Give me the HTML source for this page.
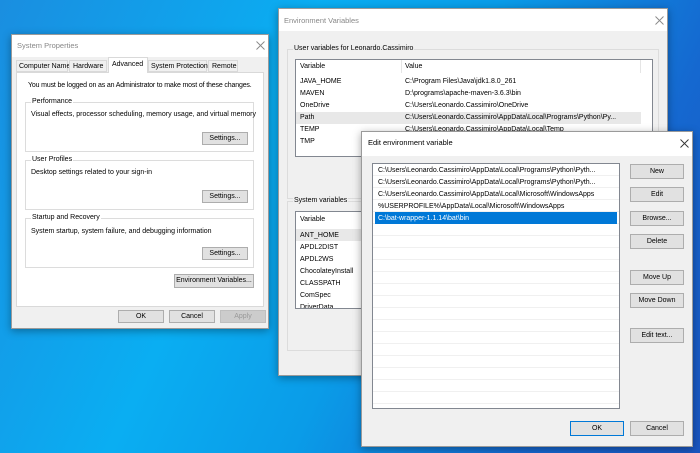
<!DOCTYPE html>
<html><head><style>
*{margin:0;padding:0;box-sizing:border-box}
body{width:700px;height:453px;overflow:hidden;position:relative;font-family:"Liberation Sans",sans-serif;font-size:7px;color:#000;
background:linear-gradient(115deg,#1a8ee0 0%,#0aaef2 35%,#0a9ce8 55%,#1568d0 80%,#1a55c0 100%)}
.a{position:absolute;white-space:nowrap}
.win{position:absolute;background:#f0f0f0;border:1px solid #9a9a9a;box-shadow:0 2px 8px rgba(0,0,0,.35)}
.tb{position:absolute;left:0;right:0;top:0;height:22px;background:#fff}
.btn{position:absolute;background:#e1e1e1;border:1px solid #adadad;text-align:center;line-height:12px}
.grp{position:absolute;border:1px solid #dcdcdc}
.lab{position:absolute;background:#f0f0f0;padding:0 1px;top:-5px;left:5px}
.list{position:absolute;background:#fff;border:1px solid #828790}
.x{position:absolute;width:9px;height:9px}
</style></head><body>
<svg width="0" height="0" style="position:absolute"><defs><symbol id="xx" viewBox="0 0 9 9"><path d="M0.5 0.5L8.5 8.5M8.5 0.5L0.5 8.5" stroke="currentColor" stroke-width="0.9" fill="none"/></symbol></defs></svg>

<!-- System Properties -->
<div class="win" style="left:11px;top:34px;width:258px;height:295px">
 <div class="tb"></div>
 <div class="a" style="left:5px;top:6px;color:#888;font-size:7.5px">System Properties</div>
 <svg class="x" style="left:244px;top:6px;color:#888"><use href="#xx"/></svg>
 <div style="position:absolute;left:4px;top:37px;width:248px;height:235px;background:#fff;border:1px solid #d9d9d9"></div>
 <div class="a" style="left:4px;top:25px;width:52px;height:12px;border:1px solid #d9d9d9;background:#f0f0f0;padding:2px 2px">Computer Name</div>
 <div class="a" style="left:57px;top:25px;width:38px;height:12px;border:1px solid #d9d9d9;background:#f0f0f0;padding:2px 3px">Hardware</div>
 <div class="a" style="left:96px;top:22px;width:40px;height:16px;border:1px solid #d9d9d9;border-bottom:none;background:#fff;padding:3px 3px">Advanced</div>
 <div class="a" style="left:136px;top:25px;width:59px;height:12px;border:1px solid #d9d9d9;background:#f0f0f0;padding:2px 2px">System Protection</div>
 <div class="a" style="left:196px;top:25px;width:30px;height:12px;border:1px solid #d9d9d9;background:#f0f0f0;padding:2px 3px">Remote</div>
 <div class="a" style="left:16px;top:47px;letter-spacing:-0.15px">You must be logged on as an Administrator to make most of these changes.</div>
 <div class="grp" style="left:13px;top:67px;width:229px;height:50px;background:#fff"><div class="lab" style="background:#fff">Performance</div>
  <div class="a" style="left:5px;top:8px">Visual effects, processor scheduling, memory usage, and virtual memory</div>
  <div class="btn" style="left:176px;top:29px;width:46px;height:13px">Settings...</div></div>
 <div class="grp" style="left:13px;top:125px;width:229px;height:50px"><div class="lab" style="background:#fff">User Profiles</div>
  <div class="a" style="left:5px;top:8px">Desktop settings related to your sign-in</div>
  <div class="btn" style="left:176px;top:29px;width:46px;height:13px">Settings...</div></div>
 <div class="grp" style="left:13px;top:183px;width:229px;height:50px"><div class="lab" style="background:#fff">Startup and Recovery</div>
  <div class="a" style="left:5px;top:9px">System startup, system failure, and debugging information</div>
  <div class="btn" style="left:176px;top:28px;width:46px;height:13px">Settings...</div></div>
 <div class="btn" style="left:162px;top:239px;width:80px;height:14px">Environment Variables...</div>
 <div class="btn" style="left:106px;top:275px;width:46px;height:13px">OK</div>
 <div class="btn" style="left:157px;top:275px;width:46px;height:13px">Cancel</div>
 <div class="btn" style="left:208px;top:275px;width:46px;height:13px;color:#999;background:#ccc;border-color:#bfbfbf">Apply</div>
</div>

<!-- Environment Variables -->
<div class="win" style="left:278px;top:8px;width:390px;height:368px">
 <div class="tb"></div>
 <div class="a" style="left:5px;top:7px;color:#888;font-size:7.5px">Environment Variables</div>
 <svg class="x" style="left:376px;top:7px;color:#888"><use href="#xx"/></svg>
 <div class="grp" style="left:8px;top:40px;width:372px;height:150px"><div class="lab">User variables for Leonardo.Cassimiro</div></div>
 <div class="list" style="left:16px;top:50px;width:358px;height:98px">
  <div class="a" style="left:0;top:0;width:345px;height:13px;border-right:1px solid #e5e5e5"></div>
  <div class="a" style="left:105px;top:0;height:13px;border-left:1px solid #e5e5e5"></div>
  <div class="a" style="left:4px;top:3px">Variable</div><div class="a" style="left:109px;top:3px">Value</div>
  <div class="a" style="left:0;top:52px;width:345px;height:12px;background:#e8e8e8"></div>
  <div class="a" style="left:4px;top:16px;line-height:12px">JAVA_HOME<br>MAVEN<br>OneDrive<br>Path<br>TEMP<br>TMP</div>
  <div class="a" style="left:109px;top:16px;line-height:12px">C:\Program Files\Java\jdk1.8.0_261<br>D:\programs\apache-maven-3.6.3\bin<br>C:\Users\Leonardo.Cassimiro\OneDrive<br>C:\Users\Leonardo.Cassimiro\AppData\Local\Programs\Python\Py...<br>C:\Users\Leonardo.Cassimiro\AppData\Local\Temp</div>
 </div>
 <div class="grp" style="left:8px;top:192px;width:372px;height:150px"><div class="lab">System variables</div></div>
 <div class="list" style="left:16px;top:202px;width:120px;height:98px;overflow:hidden">
  <div class="a" style="left:4px;top:4px">Variable</div>
  <div class="a" style="left:0;top:17px;width:120px;height:12px;background:#e8e8e8"></div>
  <div class="a" style="left:4px;top:18px;line-height:12px">ANT_HOME<br>APDL2DIST<br>APDL2WS<br>ChocolateyInstall<br>CLASSPATH<br>ComSpec<br>DriverData</div>
 </div>
</div>

<!-- Edit environment variable -->
<div class="win" style="left:361px;top:131px;width:332px;height:316px">
 <div class="tb" style="height:24px"></div>
 <div class="a" style="left:6px;top:6px;font-size:7.5px">Edit environment variable</div>
 <svg class="x" style="left:318px;top:7px;color:#333"><use href="#xx"/></svg>
 <div class="list" style="left:10px;top:31px;width:248px;height:246px;overflow:hidden;
   background:repeating-linear-gradient(#fff 0 11px,#f0f0f0 11px 12px)">
  <div class="a" style="left:2px;top:48px;width:242px;height:12px;background:#0078d7"></div>
  <div class="a" style="left:5px;top:1px;line-height:12px">C:\Users\Leonardo.Cassimiro\AppData\Local\Programs\Python\Pyth...<br>C:\Users\Leonardo.Cassimiro\AppData\Local\Programs\Python\Pyth...<br>C:\Users\Leonardo.Cassimiro\AppData\Local\Microsoft\WindowsApps<br>%USERPROFILE%\AppData\Local\Microsoft\WindowsApps<br><span style="color:#fff">C:\bat-wrapper-1.1.14\bat\bin</span></div>
 </div>
 <div class="btn" style="left:268px;top:32px;width:54px;height:15px;line-height:13px">New</div>
 <div class="btn" style="left:268px;top:55px;width:54px;height:15px;line-height:13px">Edit</div>
 <div class="btn" style="left:268px;top:79px;width:54px;height:15px;line-height:13px">Browse...</div>
 <div class="btn" style="left:268px;top:102px;width:54px;height:15px;line-height:13px">Delete</div>
 <div class="btn" style="left:268px;top:138px;width:54px;height:15px;line-height:13px">Move Up</div>
 <div class="btn" style="left:268px;top:161px;width:54px;height:15px;line-height:13px">Move Down</div>
 <div class="btn" style="left:268px;top:196px;width:54px;height:15px;line-height:13px">Edit text...</div>
 <div class="btn" style="left:208px;top:289px;width:54px;height:15px;line-height:13px;border-color:#0078d7">OK</div>
 <div class="btn" style="left:268px;top:289px;width:54px;height:15px;line-height:13px">Cancel</div>
</div>
</body></html>
